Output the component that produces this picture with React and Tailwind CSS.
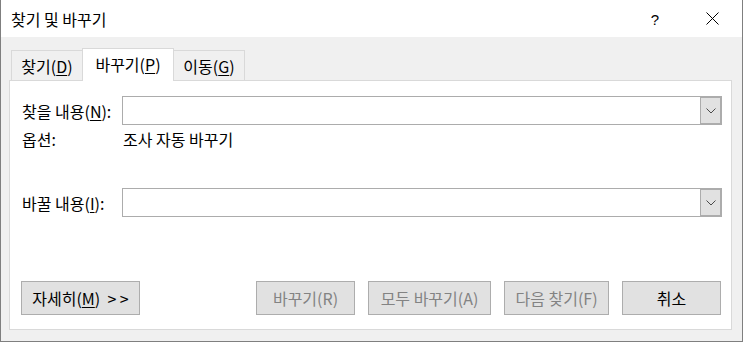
import React from "react";

const FONT = "font-['Noto_Sans_CJK_KR','Malgun_Gothic',sans-serif]";

function Combo() {
  return (
    <div className="flex h-[29px] w-[600px] border border-[#acacac] bg-white">
      <div className="flex-1" />
      <div className="flex h-full w-[21px] items-center justify-center border border-[#acacac] bg-[#e1e1e1]">
        <svg width="10" height="6" viewBox="0 0 10 6">
          <polyline points="0.5,0.5 5,5 9.5,0.5" fill="none" stroke="#4a4a4a" strokeWidth="1" />
        </svg>
      </div>
    </div>
  );
}

function Btn({ children, width, disabled }) {
  return (
    <button
      className={
        "flex h-[34px] items-center justify-center border border-[#adadad] bg-[#e1e1e1] text-[16px] leading-none " +
        width +
        (disabled ? " text-[#838383]" : " text-black")
      }
    >
      {children}
    </button>
  );
}

export default function App() {
  return (
    <div className={"flex h-[342px] w-[743px] flex-col border-x border-b border-[#7f7f7f] text-black " + FONT}>
      <div className="flex h-[37px] items-center bg-white pl-[10px]">
        <span className="text-[16px] leading-none">찾기 및 바꾸기</span>
        <div className="ml-auto mr-[7px] flex h-full gap-[11px]">
          <div className="flex w-[46px] items-center justify-center pt-[2px] font-['Liberation_Sans',sans-serif] text-[15px] leading-none">?</div>
          <div className="flex w-[46px] items-center justify-center">
            <svg width="13" height="13" viewBox="0 0 13 13">
              <path d="M0.5 0.5 L12.5 12.5 M12.5 0.5 L0.5 12.5" stroke="#000" strokeWidth="1" />
            </svg>
          </div>
        </div>
      </div>

      <div className="flex-1 bg-[#f0f0f0] pt-[11px]">
        <div className="flex h-[32px] items-end pl-[10px] text-[16px] leading-none">
          <div className="flex h-[30px] w-[71px] items-center justify-center border-l border-t border-[#d9d9d9]">
            찾기(<u className="underline-offset-2">D</u>)
          </div>
          <div className="relative z-10 -mb-px flex h-[33px] w-[92px] items-center justify-center border-x border-t border-[#d9d9d9] bg-white pb-[2px]">
            바꾸기(<u className="underline-offset-2">P</u>)
          </div>
          <div className="flex h-[30px] w-[71px] items-center justify-center border-r border-t border-[#d9d9d9]">
            이동(<u className="underline-offset-2">G</u>)
          </div>
        </div>

        <div className="ml-[8px] flex w-[723px] flex-col border border-[#d9d9d9] bg-white pb-[14px] pt-[15px] text-[16px] leading-none">
          <div className="flex h-[29px] items-center">
            <div className="w-[112px] pl-[12px]">
              찾을 내용(<u className="underline-offset-2">N</u>):
            </div>
            <Combo />
          </div>
          <div className="flex h-[30px] items-center pb-[2px]">
            <div className="w-[112px] pl-[12px]">옵션:</div>
            <div className="pl-px">조사 자동 바꾸기</div>
          </div>
          <div className="mt-[33px] flex h-[29px] items-center">
            <div className="w-[112px] pl-[12px]">
              바꿀 내용(<u className="underline-offset-2">I</u>):
            </div>
            <Combo />
          </div>
          <div className="mt-[64px] flex items-center pl-[11px] pr-[10px]">
            <Btn width="w-[119px]">
              자세히(<u className="underline-offset-2">M</u>)&nbsp;&nbsp;&gt; &gt;
            </Btn>
            <div className="ml-auto flex gap-[13px]">
              <Btn width="w-[99px]" disabled>바꾸기(R)</Btn>
              <Btn width="w-[123px]" disabled>모두 바꾸기(A)</Btn>
              <Btn width="w-[105px]" disabled>다음 찾기(F)</Btn>
              <Btn width="w-[99px]">취소</Btn>
            </div>
          </div>
        </div>
      </div>
    </div>
  );
}
